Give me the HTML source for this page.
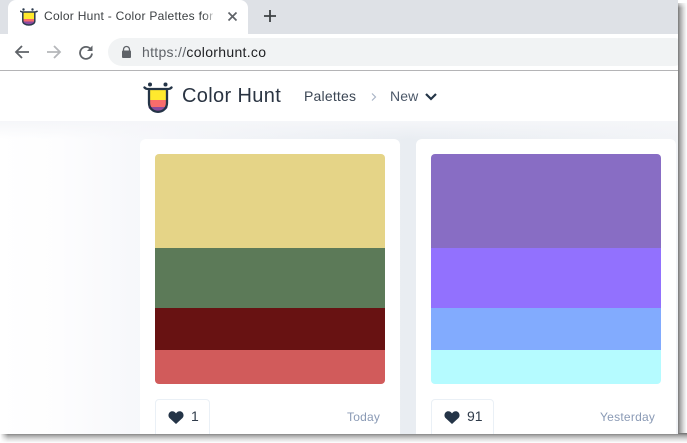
<!DOCTYPE html>
<html><head><meta charset="utf-8">
<style>
html,body{margin:0;padding:0;width:687px;height:443px;overflow:hidden;background:#fff;font-family:"Liberation Sans",sans-serif}
*{box-sizing:border-box}
.abs,.abs div,.abs svg{position:absolute}
#shadowR{left:678px;top:3px;width:9px;height:440px;background:linear-gradient(90deg,#777 0,#a8a8a8 25%,#d8d8d8 60%,#fff 100%)}
#shadowB{left:0;top:433px;width:687px;height:10px;background:linear-gradient(180deg,#6e6e6e 0,#a8a8a8 25%,#dcdcdc 60%,#fff 100%)}
#win{left:0;top:0;width:678px;height:434px;background:#fff;overflow:hidden}
.t{white-space:nowrap}
</style></head>
<body>
<div class="abs" style="left:0;top:0;width:687px;height:443px">
<div id="shadowR"></div><div id="shadowB"></div>
<div style="left:0;top:433px;width:8px;height:10px;background:linear-gradient(90deg,#fff,rgba(255,255,255,0))"></div>
<div style="left:678px;top:0;width:9px;height:8px;background:linear-gradient(180deg,#fff,rgba(255,255,255,0))"></div>
<div id="win">
 <div style="left:0;top:0;width:678px;height:34px;background:#dee1e6"></div>
 <div style="left:8px;top:0;width:240px;height:34px;background:#fff;border-radius:8px 8px 0 0"></div>
 <div style="left:0;top:34px;width:678px;height:37px;background:#fff"></div>
 <div class="t" style="left:44px;top:9px;font-size:12px;line-height:15px;color:#3c4043;width:176px;overflow:hidden;letter-spacing:.28px">Color Hunt - Color Palettes for Designers</div>
 <div style="left:204px;top:6px;width:18px;height:22px;background:linear-gradient(90deg,rgba(255,255,255,0),#fff 65%)"></div>
 <svg style="left:20px;top:8px" width="18" height="18" viewBox="0 0 18 18">
  <circle cx="3.500" cy="1.500" r="1.200" fill="#2c3a4d"/><circle cx="12.500" cy="1.500" r="1.200" fill="#2c3a4d"/>
  <path d="M2.500 4h12.500v7H2.500z" fill="#ffe92e"/><path d="M2.500 11H15v2.500H2.500z" fill="#f76a6a"/><path d="M2.500 13.500H15c0 2-2.500 3.500-6.200 3.500s-6.300-1.500-6.300-3.500z" fill="#8a4aa0"/>
  <path d="M0 3c1 .8 2 1 2.800 1v9.200c0 2 2.500 3.800 6 3.800s6-1.800 6-3.800V4c.9 0 1.800-.2 2.800-1M2.800 4h12" fill="none" stroke="#2c3a4d" stroke-width="1.500"/>
 </svg>
 <svg style="left:226px;top:10px" width="13" height="13" viewBox="0 0 13 13"><path d="M2.500 2.500l8 8M10.500 2.500l-8 8" stroke="#5f6368" stroke-width="1.700"/></svg>
 <svg style="left:263px;top:9px" width="14" height="14" viewBox="0 0 14 14"><path d="M7 1v12M1 7h12" stroke="#3c4043" stroke-width="1.800"/></svg>

 <svg style="left:14px;top:44px" width="16" height="16" viewBox="0 0 16 16"><path d="M15 8H2M8 2L2 8l6 6" fill="none" stroke="#5f6368" stroke-width="1.800"/></svg>
 <svg style="left:46px;top:44px" width="16" height="16" viewBox="0 0 16 16"><path d="M1 8h13M8 2l6 6-6 6" fill="none" stroke="#b5b7ba" stroke-width="1.800"/></svg>
 <svg style="left:78px;top:44px" width="16" height="16" viewBox="0 0 16 16"><path d="M13 5.500A6 6 0 1 0 14 9.500" fill="none" stroke="#5f6368" stroke-width="1.800"/><path d="M14.500 1.500v5.500H9z" fill="#5f6368"/></svg>
 <div style="left:108px;top:38px;width:580px;height:28px;background:#f1f3f4;border-radius:14px"></div>
 <svg style="left:120px;top:45px" width="13" height="14" viewBox="0 0 13 14"><path d="M3.500 6V4.500a3 3 0 0 1 6 0V6" fill="none" stroke="#5f6368" stroke-width="1.300"/><rect x="2" y="5.500" width="9" height="7.500" rx="1" fill="#5f6368"/></svg>
 <div class="t" style="left:142px;top:44px;font-size:14px;line-height:17px;color:#202124;letter-spacing:.3px"><span style="color:#5f6368">https://</span>colorhunt.co</div>
 <div style="left:0;top:70px;width:678px;height:1px;background:#b4b4b6"></div>

 <div style="left:0;top:121px;width:678px;height:313px;background:linear-gradient(90deg,#fff 0,#fdfdfe 60px,#f7f8fb 130px,#e9edf2 408px,#f2f4f7 678px)"></div>
 <div style="left:0;top:121px;width:678px;height:18px;background:linear-gradient(180deg,#f5f6f9,rgba(245,246,249,0))"></div>

 <svg style="left:143px;top:82px" width="30" height="32" viewBox="0 0 30 32">
  <circle cx="7" cy="2.500" r="2" fill="#243447"/><circle cx="22.500" cy="2.500" r="2" fill="#243447"/>
  <path d="M5.500 7h19v11h-19z" fill="#ffe92e"/><path d="M5.500 18h19v7h-19z" fill="#f96c6c"/><path d="M5.500 25h19c0 2.500-4.500 4.500-9.500 4.500s-9.500-2-9.500-4.500z" fill="#8d4b9e"/>
  <path d="M1.500 5.500C3 7 4 7 6 7v14c0 5 4 8.800 9 8.800s9-3.800 9-8.800V7c2 0 3 0 4.500-1.500M6 7h18" fill="none" stroke="#243447" stroke-width="2.300" stroke-linecap="round"/>
 </svg>
 <div class="t" style="left:182px;top:84px;font-size:20px;line-height:24px;color:#2a3442;letter-spacing:.35px">Color Hunt</div>
 <div class="t" style="left:304px;top:88px;font-size:14px;line-height:17px;color:#3b4654;letter-spacing:.2px">Palettes</div>
 <svg style="left:370px;top:92px" width="8" height="10" viewBox="0 0 8 10"><path d="M2 1.500L5.500 5 2 8.500" fill="none" stroke="#a9b4c6" stroke-width="1.200"/></svg>
 <div class="t" style="left:390px;top:88px;font-size:14px;line-height:17px;color:#4c5869;letter-spacing:.1px">New</div>
 <svg style="left:424px;top:91px" width="14" height="12" viewBox="0 0 14 12"><path d="M2 3l5 5 5-5" fill="none" stroke="#243447" stroke-width="2.200"/></svg>

 <div style="left:140px;top:139px;width:260px;height:300px;background:#fff;border-radius:6px"></div>
 <div style="left:155px;top:154px;width:230px;height:230px;border-radius:4px;overflow:hidden">
  <div style="left:0;top:0;width:230px;height:94px;background:#e5d487"></div>
  <div style="left:0;top:94px;width:230px;height:60px;background:#5c7a58"></div>
  <div style="left:0;top:154px;width:230px;height:42px;background:#681212"></div>
  <div style="left:0;top:196px;width:230px;height:34px;background:#d15b5b"></div>
 </div>
 <div style="left:155px;top:399px;width:55px;height:40px;border:1px solid #eaf0f6;border-radius:4px"></div>
 <svg style="left:168px;top:411px" width="16" height="13" viewBox="0 0 17 14"><path d="M8.500 14L1.500 7.500C-.5 5.300.3 1.500 3 .5c2.200-.7 4.200.2 5.500 2 1.300-1.800 3.300-2.700 5.500-2 2.700 1 3.500 4.800 1.500 7z" fill="#243447"/></svg>
 <div class="t" style="left:191px;top:408px;font-size:14px;line-height:17px;color:#2f3b4a">1</div>
 <div class="t" style="left:347px;top:410px;font-size:12px;line-height:15px;color:#8a9ab5;letter-spacing:.2px">Today</div>

 <div style="left:416px;top:139px;width:260px;height:300px;background:#fff;border-radius:6px"></div>
 <div style="left:431px;top:154px;width:230px;height:230px;border-radius:4px;overflow:hidden">
  <div style="left:0;top:0;width:230px;height:94px;background:#886dc4"></div>
  <div style="left:0;top:94px;width:230px;height:60px;background:#9271fe"></div>
  <div style="left:0;top:154px;width:230px;height:42px;background:#82abfe"></div>
  <div style="left:0;top:196px;width:230px;height:34px;background:#b5fbff"></div>
 </div>
 <div style="left:431px;top:399px;width:63px;height:40px;border:1px solid #eaf0f6;border-radius:4px"></div>
 <svg style="left:444px;top:411px" width="16" height="13" viewBox="0 0 17 14"><path d="M8.500 14L1.500 7.500C-.5 5.300.3 1.500 3 .5c2.200-.7 4.200.2 5.500 2 1.300-1.800 3.300-2.700 5.500-2 2.700 1 3.500 4.800 1.500 7z" fill="#243447"/></svg>
 <div class="t" style="left:467px;top:408px;font-size:14px;line-height:17px;color:#2f3b4a">91</div>
 <div class="t" style="left:600px;top:410px;font-size:12px;line-height:15px;color:#8a9ab5;letter-spacing:.25px">Yesterday</div>
</div>
</div>
</body></html>
